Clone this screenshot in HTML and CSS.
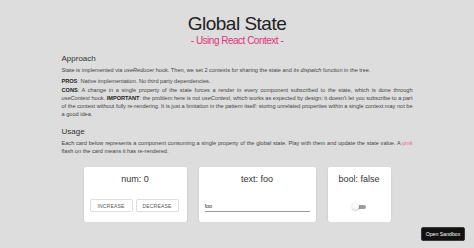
FILE: index.html
```html
<!DOCTYPE html>
<html>
<head>
  <link rel="stylesheet" href="styles.css">
</head>
<body>
  <header class="header">
    <h1>Global State</h1>
    <div class="subtitle">- Using React Context -</div>
  </header>

  <main class="content">
    <h2>Approach</h2>
    <p>State is implemented via <em>useReducer</em> hook. Then, we set 2 contexts for sharing the state and <em>its dispatch</em> function in the tree.</p>
    <p><b>PROS</b>: Native implementation. No third party dependencies.<br>
      <b>CONS</b>: A change in a single property of the state forces a render in every component subscribed to the state, which is done through <em>useContext</em> hook. <b>IMPORTANT</b>: the problem here is not <em>useContext</em>, which works as expected by design: it doesn't let you subscribe to a part of the context without fully re-rendering. It is just a limitation in the pattern itself: storing unrelated properties within a single context may not be a good idea.</p>

    <h2 class="usage">Usage</h2>
    <p>Each card below represents a component consuming a single property of the global state. Play with them and update the state value. A <span class="pink">pink</span> flash on the card means it has re-rendered.</p>
  </main>

  <div class="cards">
    <div class="card card-num">
      <div class="card-title">num: 0</div>
      <div class="card-body">
        <button class="btn">Increase</button>
        <button class="btn">Decrease</button>
      </div>
    </div>
    <div class="card card-text">
      <div class="card-title">text: foo</div>
      <div class="card-body">
        <input class="field" type="text" value="foo">
      </div>
    </div>
    <div class="card card-bool">
      <div class="card-title">bool: false</div>
      <div class="card-body center">
        <span class="switch"><span class="thumb"></span></span>
      </div>
    </div>
  </div>

  <a class="sandbox">Open Sandbox</a>
</body>
</html>
```

FILE: styles.css
```css
* {
  box-sizing: border-box;
}

body {
  margin: 0;
  background: #dddddd;
  font-family: "Liberation Sans", Arial, sans-serif;
  color: #333;
}

.header {
  text-align: center;
  padding-top: 14px;
}

.header h1 {
  margin: 0;
  font-size: 19px;
  line-height: 20px;
  font-weight: normal;
  letter-spacing: -0.5px;
  color: #222;
}

.subtitle {
  margin-top: 1px;
  font-size: 10px;
  line-height: 12px;
  letter-spacing: -0.5px;
  color: #e0347a;
}

.content {
  width: 351px;
  margin: 7px auto 0;
}

.content h2 {
  margin: 0 0 2px;
  font-size: 8px;
  line-height: 10px;
  font-weight: normal;
  color: #333;
}

.content h2.usage {
  margin-top: 8px;
}

.content p {
  margin: 0 0 3px;
  font-size: 5.6px;
  line-height: 8.25px;
  text-align: justify;
  color: #444;
}

.content b {
  color: #222;
}

.pink {
  color: #e86a9a;
}

.cards {
  display: flex;
  justify-content: center;
  gap: 12px;
  margin-top: 12px;
}

.card {
  height: 55px;
  padding: 7px 6px 0;
  background: white;
  border-radius: 2px;
  box-shadow: 0 1px 2px rgba(0,0,0,0.15);
}

.card-num { width: 103px; }
.card-text { width: 117px; }
.card-bool { width: 63px; }

.card-title {
  text-align: center;
  font-size: 9px;
  line-height: 11px;
  color: #333;
}

.card-body {
  display: flex;
  align-items: center;
  gap: 3px;
  height: 13px;
  margin-top: 14px;
}

.card-body.center {
  justify-content: center;
}

.btn {
  width: 43px;
  height: 13px;
  padding: 0;
  font-family: inherit;
  font-size: 5px;
  letter-spacing: 0.2px;
  text-transform: uppercase;
  color: #555;
  background: white;
  border: 1px solid #dedede;
  border-radius: 2px;
}

.field {
  width: 105px;
  height: 12px;
  padding: 0;
  margin-top: 1px;
  font-family: inherit;
  font-size: 5.5px;
  color: #222;
  background: transparent;
  border: none;
  border-bottom: 1px solid #9a9a9a;
  outline: none;
}

.switch {
  position: relative;
  display: block;
  width: 12px;
  height: 4px;
  margin-top: 2px;
  margin-left: 2px;
  border-radius: 2px;
  background: #9e9e9e;
}

.thumb {
  position: absolute;
  left: -2px;
  top: -2px;
  width: 7px;
  height: 7px;
  border-radius: 50%;
  background: #fafafa;
  box-shadow: 0 0.5px 1.5px rgba(0,0,0,0.35);
}

.sandbox {
  position: fixed;
  right: 9px;
  bottom: 7px;
  width: 44px;
  height: 14px;
  display: flex;
  align-items: center;
  justify-content: center;
  font-size: 5.2px;
  color: #fff;
  background: #111;
  border: 1px solid #3a3a3a;
  border-radius: 2px;
}
```
